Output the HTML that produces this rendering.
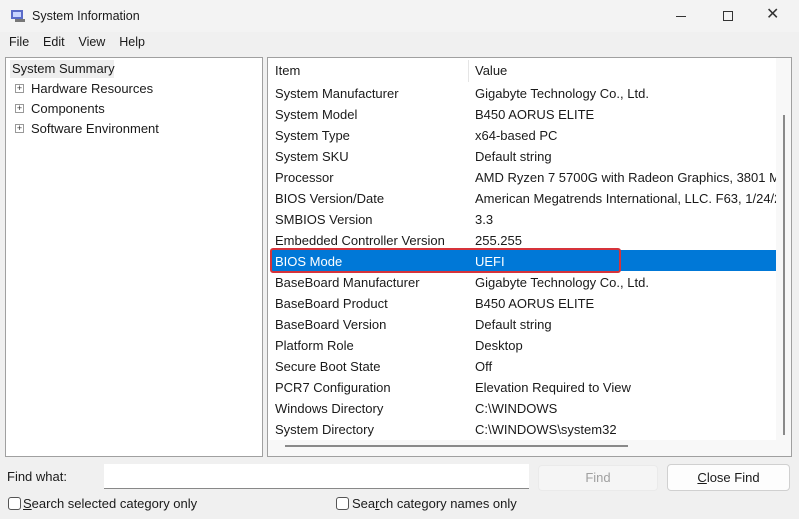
<!DOCTYPE html><html><head><style>
*{margin:0;padding:0;box-sizing:border-box}
body{width:799px;height:519px;background:#f0f0f0;font-family:"Liberation Sans",sans-serif;font-size:13px;color:#1a1a1a;position:relative;overflow:hidden}
.a{position:absolute;white-space:nowrap}
.row{position:absolute;left:275px;height:21px;line-height:21px;width:501px;white-space:nowrap;overflow:hidden}
.row span{position:absolute;left:200px;white-space:nowrap}
</style></head><body>
<div class="a" style="left:0;top:0;width:799px;height:32px;background:#f3f3f3"></div>
<svg class="a" style="left:10px;top:8px" width="16" height="16"><rect x="1" y="2" width="12" height="9" fill="#5a6bc8"/><rect x="3" y="4" width="8" height="5" fill="#c8d4ff"/><rect x="5" y="11" width="10" height="3" fill="#777"/></svg>
<div class="a" style="left:32px;top:9px;font-size:12.5px">System Information</div>
<div class="a" style="left:676px;top:16px;width:10px;height:1px;background:#333"></div>
<div class="a" style="left:723px;top:11px;width:10px;height:10px;border:1px solid #333"></div>
<div class="a" style="left:766px;top:4px;font-size:16px;color:#333">✕</div>
<div class="a" style="left:9px;top:35px;font-size:12.5px">File&nbsp;&nbsp;&nbsp; Edit&nbsp;&nbsp;&nbsp; View&nbsp;&nbsp;&nbsp; Help</div>
<div class="a" style="left:5px;top:57px;width:258px;height:400px;background:#fff;border:1px solid #a0a0a0"></div>
<div class="a" style="left:10px;top:60px;width:104px;height:18px;background:#eee"></div>
<div class="a" style="left:12px;top:61px">System Summary</div>
<div class="a" style="left:31px;top:81px">Hardware Resources</div>
<div class="a" style="left:31px;top:101px">Components</div>
<div class="a" style="left:31px;top:121px">Software Environment</div>
<div class="a" style="left:15px;top:84px;width:9px;height:9px;border:1px solid #999;font-size:9px;line-height:7px;text-align:center;color:#333">+</div>
<div class="a" style="left:15px;top:104px;width:9px;height:9px;border:1px solid #999;font-size:9px;line-height:7px;text-align:center;color:#333">+</div>
<div class="a" style="left:15px;top:124px;width:9px;height:9px;border:1px solid #999;font-size:9px;line-height:7px;text-align:center;color:#333">+</div>
<div class="a" style="left:267px;top:57px;width:525px;height:400px;background:#fff;border:1px solid #a0a0a0"></div>
<div class="a" style="left:468px;top:60px;width:1px;height:22px;background:#e5e5e5"></div>
<div class="a" style="left:275px;top:63px">Item</div><div class="a" style="left:475px;top:63px">Value</div>
<div class="a" style="left:271px;top:250px;width:505px;height:21px;background:#0078d7"></div>
<div class="row" style="top:83px">System Manufacturer<span>Gigabyte Technology Co., Ltd.</span></div>
<div class="row" style="top:104px">System Model<span>B450 AORUS ELITE</span></div>
<div class="row" style="top:125px">System Type<span>x64-based PC</span></div>
<div class="row" style="top:146px">System SKU<span>Default string</span></div>
<div class="row" style="top:167px">Processor<span>AMD Ryzen 7 5700G with Radeon Graphics, 3801 M</span></div>
<div class="row" style="top:188px">BIOS Version/Date<span>American Megatrends International, LLC. F63, 1/24/2</span></div>
<div class="row" style="top:209px">SMBIOS Version<span>3.3</span></div>
<div class="row" style="top:230px">Embedded Controller Version<span>255.255</span></div>
<div class="row" style="top:251px;color:#fff">BIOS Mode<span>UEFI</span></div>
<div class="row" style="top:272px">BaseBoard Manufacturer<span>Gigabyte Technology Co., Ltd.</span></div>
<div class="row" style="top:293px">BaseBoard Product<span>B450 AORUS ELITE</span></div>
<div class="row" style="top:314px">BaseBoard Version<span>Default string</span></div>
<div class="row" style="top:335px">Platform Role<span>Desktop</span></div>
<div class="row" style="top:356px">Secure Boot State<span>Off</span></div>
<div class="row" style="top:377px">PCR7 Configuration<span>Elevation Required to View</span></div>
<div class="row" style="top:398px">Windows Directory<span>C:\WINDOWS</span></div>
<div class="row" style="top:419px">System Directory<span>C:\WINDOWS\system32</span></div>
<div class="a" style="left:270px;top:248px;width:351px;height:25px;border:2.5px solid #d6333a;border-radius:3px"></div>
<div class="a" style="left:776px;top:58px;width:15px;height:398px;background:#f8f8f8"></div>
<div class="a" style="left:783px;top:115px;width:2px;height:320px;background:#8a8a8a"></div>
<div class="a" style="left:268px;top:440px;width:508px;height:16px;background:#f8f8f8"></div>
<div class="a" style="left:285px;top:445px;width:343px;height:2px;background:#8a8a8a"></div>
<div class="a" style="left:7px;top:469px">Find what:</div>
<div class="a" style="left:104px;top:464px;width:425px;height:25px;background:#fff;border-bottom:1px solid #888"></div>
<div class="a" style="left:538px;top:465px;width:120px;height:26px;background:#f5f5f5;border:1px solid #eaeaea;border-radius:4px;color:#a0a0a0;text-align:center;line-height:24px">Find</div>
<div class="a" style="left:667px;top:464px;width:123px;height:27px;background:#fdfdfd;border:1px solid #d0d0d0;border-radius:4px;text-align:center;line-height:25px"><u>C</u>lose Find</div>
<div class="a" style="left:8px;top:497px;width:13px;height:13px;border:1px solid #555;border-radius:3px;background:#fff"></div>
<div class="a" style="left:23px;top:496px"><u>S</u>earch selected category only</div>
<div class="a" style="left:336px;top:497px;width:13px;height:13px;border:1px solid #555;border-radius:3px;background:#fff"></div>
<div class="a" style="left:352px;top:496px">Sea<u>r</u>ch category names only</div>
</body></html>
